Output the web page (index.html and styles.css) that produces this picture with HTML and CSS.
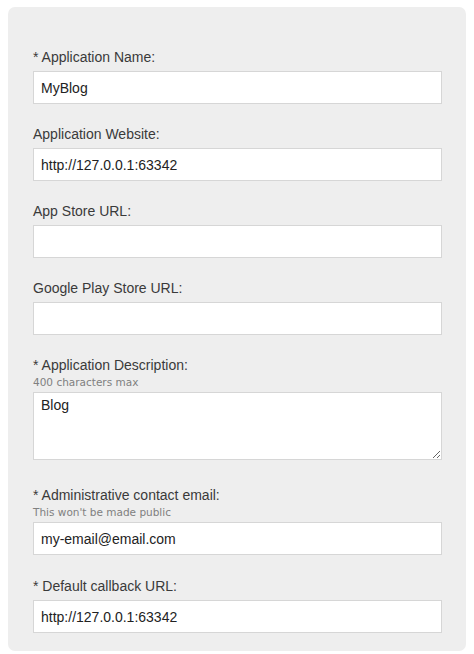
FILE: index.html
```html
<!DOCTYPE html>
<html lang="en">
<head>
    <meta charset="UTF-8">
    <meta name="viewport" content="width=device-width, initial-scale=1.0">
    <title>Register Application</title>
    <link rel="stylesheet" href="styles.css">
</head>
<body>
    <form class="app-form">
        <div class="field">
            <label for="name">* Application Name:</label>
            <input type="text" id="name" value="MyBlog">
        </div>
        <div class="field">
            <label for="website">Application Website:</label>
            <input type="text" id="website" value="http://127.0.0.1:63342">
        </div>
        <div class="field">
            <label for="appstore">App Store URL:</label>
            <input type="text" id="appstore">
        </div>
        <div class="field">
            <label for="playstore">Google Play Store URL:</label>
            <input type="text" id="playstore">
        </div>
        <div class="field field-area">
            <label for="description">* Application Description:</label>
            <span class="hint">400 characters max</span>
            <textarea id="description">Blog</textarea>
        </div>
        <div class="field field-email">
            <label for="email">* Administrative contact email:</label>
            <span class="hint">This won't be made public</span>
            <input type="text" id="email" value="my-email@email.com">
        </div>
        <div class="field field-last">
            <label for="callback">* Default callback URL:</label>
            <input type="text" id="callback" value="http://127.0.0.1:63342">
        </div>
    </form>
</body>
</html>
```

FILE: styles.css
```css
/* Light form panel */
body {
    margin: 7px 8px;
    background: #ffffff;
    font-family: "Liberation Sans", Arial, sans-serif;
    color: #3a3a3a;
}

.app-form {
    background: #eeeeee;
    border-radius: 7px;
    padding: 40px 24px 18px 25px;
}

.field {
    margin-bottom: 20px;
}

.field-area {
    margin-bottom: 25px;
}

.field-email {
    margin-bottom: 21px;
}

.field-last {
    margin-bottom: 0;
}

.field label {
    display: block;
    font-size: 14px;
    line-height: 20px;
    margin-bottom: 4px;
}

.hint {
    display: block;
    font-family: "DejaVu Sans", sans-serif;
    font-size: 10.5px;
    line-height: 14px;
    color: #808080;
    margin-top: -4px;
    margin-bottom: 3px;
}

input, textarea {
    display: block;
    box-sizing: border-box;
    width: 100%;
    margin: 0;
    border: 1px solid #d6d6d6;
    border-radius: 0;
    background: #ffffff;
    font-family: "Liberation Sans", Arial, sans-serif;
    font-size: 14px;
    color: #222222;
    padding: 0 7px;
}

input {
    height: 33px;
}

textarea {
    height: 68px;
    padding: 4px 7px;
}
```
